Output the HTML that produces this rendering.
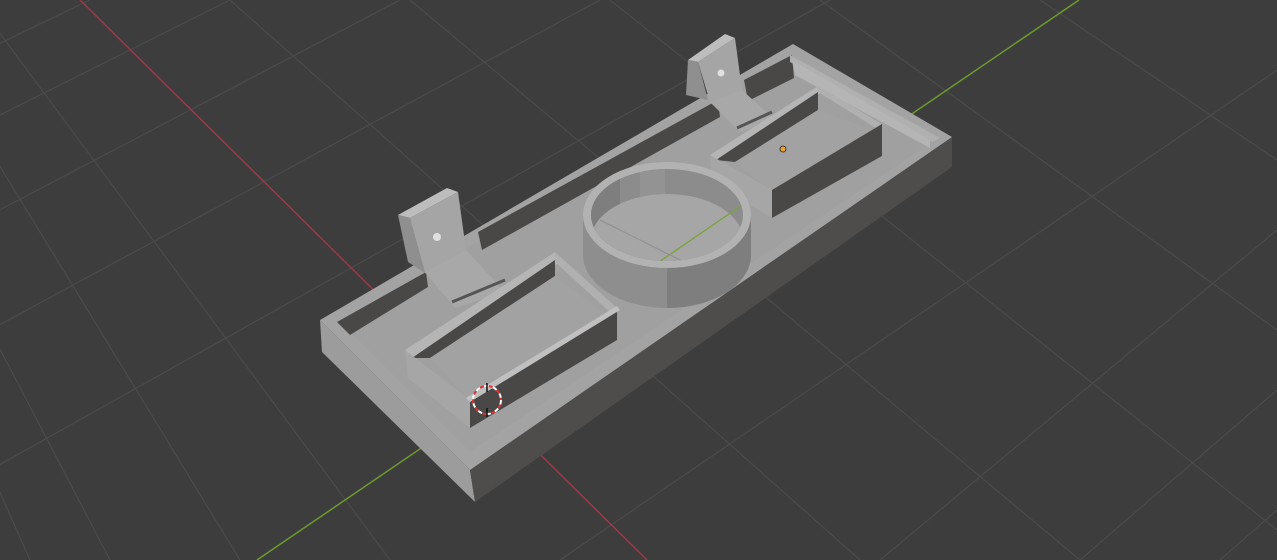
<!DOCTYPE html>
<html><head><style>html,body{margin:0;padding:0;background:#3d3d3d;overflow:hidden}svg{display:block}</style></head>
<body>
<svg width="1277" height="560" viewBox="0 0 1277 560" xmlns="http://www.w3.org/2000/svg">
<defs>
<clipPath id="inner"><ellipse cx="667" cy="215" rx="76" ry="46"/></clipPath>
</defs>
<rect width="1277" height="560" fill="#3d3d3d"/>
<g stroke="#4b4b4b" stroke-width="1.2" fill="none">
<line x1="830" y1="0" x2="-10" y2="470"/>
<line x1="600" y1="0" x2="-10" y2="330"/>
<line x1="400" y1="0" x2="-10" y2="215"/>
<line x1="230" y1="0" x2="-10" y2="120"/>
<line x1="90" y1="0" x2="-10" y2="48"/>
<line x1="1277" y1="70" x2="560" y2="560"/>
<line x1="1277" y1="230" x2="880" y2="560"/>
<line x1="1277" y1="390" x2="1080" y2="560"/>
<line x1="1277" y1="510" x2="1220" y2="560"/>
<line x1="-10" y1="150" x2="240" y2="560"/>
<line x1="-10" y1="330" x2="110" y2="560"/>
<line x1="-10" y1="470" x2="30" y2="560"/>
<line x1="230" y1="0" x2="860" y2="560"/>
<line x1="410" y1="0" x2="1080" y2="560"/>
<line x1="610" y1="0" x2="1277" y2="530"/>
<line x1="820" y1="0" x2="1277" y2="330"/>
<line x1="1040" y1="0" x2="1277" y2="160"/>
<line x1="-10" y1="20" x2="390" y2="560"/>
</g>
<line x1="80" y1="0" x2="647" y2="560" stroke="#9a3a48" stroke-width="1.5"/>
<line x1="1079" y1="0" x2="257" y2="560" stroke="#6d9a2e" stroke-width="1.5"/>
<!-- plate -->
<polygon points="320,320 470,470 475,502 322,352" fill="#9c9c9c"/>
<polygon points="470,470 952,137 952,167 475,502" fill="#4f4d4c"/>
<polygon points="320,320 793,44 952,137 470,470" fill="#a3a3a3"/>
<polygon points="340,322 790,60 932,142 470,452" fill="#a0a0a0"/>
<polygon points="337,322 426,272 428,287 350,335" fill="#4a4847"/>
<polygon points="478,232 718,100 720,117 482,250" fill="#4a4847"/>
<polygon points="744,80 792,55 794,78 748,101" fill="#4a4847"/>
<polygon points="790,55 940,138 932,142 790,62" fill="#b0b0b0"/>
<polygon points="792,60 930,140 930,148 795,75" fill="#b5b5b5"/>
<!-- left bracket -->
<polygon points="398,215 447,188 458,192 410,218" fill="#bdbdbd"/>
<polygon points="398,215 410,218 428,275 408,262" fill="#8f8f8f"/>
<polygon points="410,218 458,192 466,250 425,272" fill="#a5a5a5"/>
<circle cx="437" cy="237" r="4" fill="#e0e0e0"/>
<polygon points="425,272 466,250 505,292 455,308" fill="#a8a8a8"/>
<line x1="452" y1="302" x2="505" y2="280" stroke="#555" stroke-width="3"/>
<!-- right bracket -->
<polygon points="688,60 725,34 735,38 698,62" fill="#bdbdbd"/>
<polygon points="688,60 698,62 708,100 686,95" fill="#8f8f8f"/>
<polygon points="698,62 735,38 742,90 710,102" fill="#a5a5a5"/>
<circle cx="721" cy="73" r="3.5" fill="#e0e0e0"/>
<polygon points="710,102 742,90 775,120 740,132" fill="#a8a8a8"/>
<line x1="737" y1="128" x2="772" y2="112" stroke="#555" stroke-width="3"/>
<!-- left pocket -->
<polygon points="405,350 555,252 560,262 412,358" fill="#b5b5b5"/>
<polygon points="412,358 555,260 555,276 430,358" fill="#4a4847"/>
<polygon points="555,252 617,308 612,314 555,262" fill="#b0b0b0"/>
<polygon points="430,358 555,276 608,316 480,410" fill="#a2a2a2"/>
<polygon points="405,350 412,358 472,410 470,428" fill="#b2b2b2"/>
<polygon points="405,350 470,400 470,428 408,378" fill="#a6a6a6"/>
<polygon points="470,400 617,308 617,340 470,428" fill="#4a4847"/>
<polygon points="466,398 617,306 620,310 470,402" fill="#c0c0c0"/>
<!-- right pocket -->
<polygon points="710,155 818,86 822,92 716,160" fill="#b5b5b5"/>
<polygon points="716,160 818,92 818,110 735,162" fill="#4a4847"/>
<polygon points="818,86 882,124 876,128 818,92" fill="#b0b0b0"/>
<polygon points="735,162 818,110 872,130 775,195" fill="#a2a2a2"/>
<polygon points="710,155 772,190 772,218 712,182" fill="#a6a6a6"/>
<polygon points="772,190 882,124 882,156 772,218" fill="#4a4847"/>
<circle cx="783" cy="149" r="3" fill="#f0a030" stroke="#222" stroke-width="0.8"/>
<!-- ring -->
<path d="M583,215 L583,255 A84,53 0 0 0 751,255 L751,215 Z" fill="#8e8e8e"/>
<path d="M667,255 L751,215 L751,255 A84,53 0 0 1 667,308 Z" fill="#7e7e7e"/>
<ellipse cx="667" cy="215" rx="84" ry="53" fill="#b2b2b2"/>
<ellipse cx="667" cy="215" rx="76" ry="46" fill="#8c8c8c"/>
<g clip-path="url(#inner)">
<rect x="590" y="160" width="30" height="120" fill="#7e7e7e"/>
<rect x="640" y="160" width="25" height="120" fill="#939393"/>
<ellipse cx="667" cy="240" rx="76" ry="46" fill="#a6a6a6"/>
<line x1="640" y1="275" x2="742" y2="205" stroke="#7aa23a" stroke-width="1.3"/>
<line x1="600" y1="220" x2="700" y2="270" stroke="#8e8e8e" stroke-width="1"/>
</g>
<!-- cursor -->
<circle cx="487" cy="400" r="14" fill="none" stroke="#fff" stroke-width="2" stroke-dasharray="5 4"/>
<circle cx="487" cy="400" r="14" fill="none" stroke="#d33" stroke-width="2" stroke-dasharray="4 5" stroke-dashoffset="4.5"/>
<line x1="487" y1="383" x2="487" y2="392" stroke="#111" stroke-width="1.5"/>
<line x1="487" y1="408" x2="487" y2="417" stroke="#111" stroke-width="1.5"/>
</svg>
</body></html>
